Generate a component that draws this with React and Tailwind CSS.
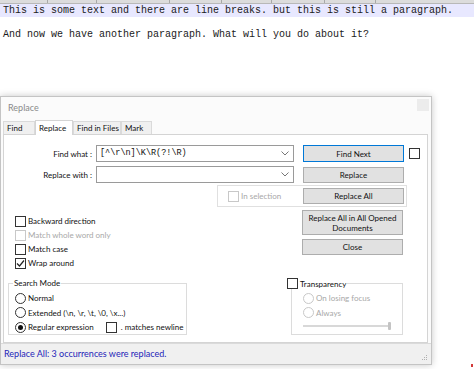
import React from 'react';

const ui = { fontFamily: 'Lato, "Noto Sans", sans-serif' };
const mono = { fontFamily: '"Liberation Mono", "DejaVu Sans Mono", monospace' };

const Check = ({ checked, disabled }) => (
    <span className={`w-[11px] h-[11px] shrink-0 border bg-white flex items-center justify-center ${disabled ? 'border-[#c8c8c8]' : 'border-[#333]'}`}>
        {checked && (
            <svg width="9" height="9" viewBox="0 0 9 9">
                <path d="M1 4.5 L3.5 7 L8 1.5" fill="none" stroke="#222" strokeWidth="1.2" />
            </svg>
        )}
    </span>
);

const Radio = ({ selected, disabled }) => (
    <span className={`w-[11px] h-[11px] shrink-0 rounded-full border bg-white flex items-center justify-center ${disabled ? 'border-[#c8c8c8]' : 'border-[#333]'}`}>
        {selected && <span className="w-[5px] h-[5px] rounded-full bg-[#111]"></span>}
    </span>
);

const Button = ({ children, focused, className = '' }) => (
    <div className={`w-[101px] shrink-0 flex items-center justify-center text-center leading-[10px] bg-[#e1e1e1] border ${focused ? 'border-[#0078d7]' : 'border-[#adadad]'} ${className}`}>
        {children}
    </div>
);

const Combo = ({ value }) => (
    <div className="w-[198px] h-[17px] shrink-0 border border-[#9a9a9a] bg-white flex items-center pl-[3px] pr-[4px]">
        <span className="flex-1 text-[8.5px] text-[#111]" style={mono}>{value}</span>
        <svg width="8" height="5" viewBox="0 0 8 5">
            <path d="M0.5 0.5 L4 4 L7.5 0.5" fill="none" stroke="#777" strokeWidth="1" />
        </svg>
    </div>
);

const tabs = [
    { label: 'Find', w: 'w-[32px]' },
    { label: 'Replace', w: 'w-[38px]', active: true },
    { label: 'Find in Files', w: 'w-[48px]' },
    { label: 'Mark', w: 'w-[31px]' },
];

export default function App() {
    return (
        <div className="w-[474px] h-[369px] relative overflow-hidden bg-white text-[8px] text-[#111] whitespace-nowrap" style={ui}>
            {/* Editor */}
            <div className="h-[4px] bg-[#dcdcdc] border-b border-[#b8b8b8] flex">
                {[48, 49, 73, 52, 50, 53, 51].map((w, i) => (
                    <div key={i} className="h-full border-r border-[#a8a8a8]" style={{ width: w }}></div>
                ))}
            </div>
            <div className="text-[10px] leading-[12px] text-[#1a1a1a] whitespace-pre" style={mono}>
                <div className="h-[13px] bg-[#e8e8ff] pl-[3px] pt-[1px]">This is some text and there are line breaks. but this is still a paragraph.</div>
                <div className="h-[11px]"></div>
                <div className="h-[12px] pl-[3px] pt-[1px]">And now we have another paragraph. What will you do about it?</div>
            </div>

            {/* Dialog */}
            <div className="absolute left-0 top-[96px] w-[432px] h-[269px] bg-[#fbfbfb] border border-[#c4c4c4] shadow-[0_0_7px_rgba(0,0,0,0.22)] flex flex-col">
                <div className="h-[22px] flex items-center justify-between pl-[7px] pr-[2px]">
                    <span className="text-[9px] text-[#8a8a8a]">Replace</span>
                    <span className="w-[12px] h-[12px] bg-[#ececec] mt-[-6px]"></span>
                </div>

                <div className="h-[15px] flex items-end pl-[2px]">
                    {tabs.map((t) => (
                        <div
                            key={t.label}
                            className={`${t.w} flex items-center pl-[3px] border border-b-0 ${t.active ? 'h-[15px] bg-white border-[#d4d4d4] relative top-[1px] z-10' : 'h-[13px] bg-[#f0f0f0] border-[#dadada]'}`}
                        >
                            {t.label}
                        </div>
                    ))}
                </div>

                <div className="ml-[2px] w-[425px] h-[209px] bg-white border border-[#d4d4d4] flex flex-col">
                    {/* Find what */}
                    <div className="flex items-center mt-[10px]">
                        <span className="w-[88px] text-right">Find what :</span>
                        <span className="ml-[4px]"><Combo value="[^\r\n]\K\R(?!\R)" /></span>
                        <Button focused className="ml-[9px] h-[17px]">Find Next</Button>
                        <span className="ml-[5px]"><Check /></span>
                    </div>
                    {/* Replace with */}
                    <div className="flex items-center mt-[4px]">
                        <span className="w-[88px] text-right">Replace with :</span>
                        <span className="ml-[4px]"><Combo value="" /></span>
                        <Button className="ml-[9px] h-[16px]">Replace</Button>
                    </div>

                    {/* Options + buttons */}
                    <div className="flex mt-[2px]">
                        <div className="w-[213px] pl-[11px] pt-[29px]">
                            {[
                                { label: 'Backward direction' },
                                { label: 'Match whole word only', disabled: true },
                                { label: 'Match case' },
                                { label: 'Wrap around', checked: true },
                            ].map((o) => (
                                <div key={o.label} className="h-[14px] flex items-center gap-[2px]">
                                    <Check checked={o.checked} disabled={o.disabled} />
                                    <span className={o.disabled ? 'text-[#a8a8a8]' : ''}>{o.label}</span>
                                </div>
                            ))}
                        </div>
                        <div className="flex flex-col">
                            <div className="w-[190px] h-[22px] border border-[#e0e0e0] flex items-center pl-[10px] pr-[2px]">
                                <Check disabled />
                                <span className="ml-[2px] text-[#a8a8a8]">In selection</span>
                                <Button className="ml-auto h-[16px]">Replace All</Button>
                            </div>
                            <Button className="ml-[85px] mt-[3px] h-[25px]">
                                Replace All in All Opened
                                <br />
                                Documents
                            </Button>
                            <Button className="ml-[85px] mt-[4px] h-[16px]">Close</Button>
                        </div>
                    </div>

                    {/* Search mode + transparency */}
                    <div className="flex mt-[8px]">
                        <div className="ml-[4px] w-[179px] h-[57px] relative">
                            <div className="absolute left-0 right-0 top-[5px] bottom-0 border border-[#dcdcdc]"></div>
                            <span className="absolute left-[5px] top-0 h-[11px] leading-[11px] px-[1px] bg-white">Search Mode</span>
                            <div className="relative pt-[13px] pl-[7px]">
                                <div className="h-[14px] flex items-center gap-[2px]">
                                    <Radio />
                                    <span>Normal</span>
                                </div>
                                <div className="h-[15px] flex items-center gap-[2px]">
                                    <Radio />
                                    <span>Extended (\n, \r, \t, \0, \x...)</span>
                                </div>
                                <div className="h-[14px] flex items-center gap-[2px]">
                                    <Radio selected />
                                    <span>Regular expression</span>
                                    <span className="ml-[10px]"><Check /></span>
                                    <span className="ml-[2px]">. matches newline</span>
                                </div>
                            </div>
                        </div>

                        <div className="ml-[100px] w-[116px] h-[57px] relative">
                            <div className="absolute left-[4px] right-0 top-[5px] bottom-0 border border-[#dcdcdc]"></div>
                            <div className="absolute left-0 top-0 h-[11px] flex items-center gap-[2px] bg-white pr-[1px]">
                                <Check />
                                <span>Transparency</span>
                            </div>
                            <div className="relative pt-[13px] pl-[16px] text-[#a8a8a8]">
                                <div className="h-[14px] flex items-center gap-[2px]">
                                    <Radio disabled />
                                    <span>On losing focus</span>
                                </div>
                                <div className="h-[15px] flex items-center gap-[2px]">
                                    <Radio disabled />
                                    <span>Always</span>
                                </div>
                                <div className="h-[12px] flex items-center">
                                    <div className="w-[85px] h-[2px] bg-[#d8d8d8]"></div>
                                    <div className="w-[3px] h-[8px] bg-[#c4c4c4] rounded-[1px]"></div>
                                </div>
                            </div>
                        </div>
                    </div>
                </div>

                {/* Status bar */}
                <div className="flex-1 bg-[#f0f0f0] border-t border-[#dadada] flex items-center justify-between pl-[3px] pr-[3px]">
                    <span className="text-[9px] text-[#2424b8]">Replace All: 3 occurrences were replaced.</span>
                    <svg width="6" height="6" viewBox="0 0 6 6" className="self-end mb-[3px]">
                        <rect x="4" y="0" width="1" height="1" fill="#b0b0b0" />
                        <rect x="2" y="2" width="1" height="1" fill="#b0b0b0" />
                        <rect x="4" y="2" width="1" height="1" fill="#b0b0b0" />
                        <rect x="0" y="4" width="1" height="1" fill="#b0b0b0" />
                        <rect x="2" y="4" width="1" height="1" fill="#b0b0b0" />
                        <rect x="4" y="4" width="1" height="1" fill="#b0b0b0" />
                    </svg>
                </div>
            </div>

            <span className="absolute left-[471px] top-[364px] w-[2px] h-[3px] bg-[#d23a3a]"></span>
        </div>
    );
}
